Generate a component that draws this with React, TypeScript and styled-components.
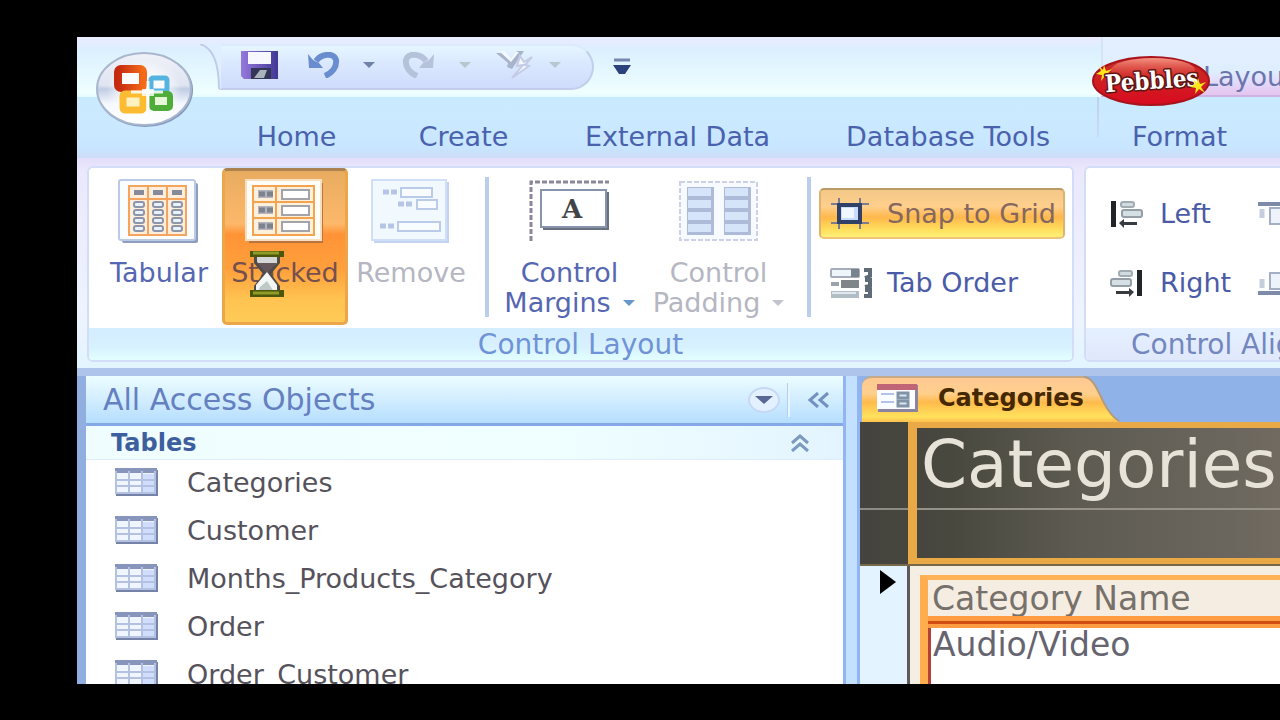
import React from "react";
import styled, { createGlobalStyle, css } from "styled-components";

const GlobalStyle = createGlobalStyle`
  *, *::before, *::after { box-sizing: border-box; }
  html, body { margin: 0; background: #000; }
  body { font-family: "DejaVu Sans", Verdana, sans-serif; font-size: 27px; overflow: hidden; }
  button, input { font: inherit; }
  h1, h2, ul { margin: 0; padding: 0; font-weight: normal; }
  svg { display: block; flex: none; }
`;

const Screen = styled.div`
  height: 100vh;
  padding: 37px 0 36px 77px;
`;

const Window = styled.div`
  position: relative;
  display: flex;
  flex-direction: column;
  height: 100%;
  overflow: hidden;
  background: #cbe9ff;
  white-space: nowrap;
`;

const PlainButton = styled.button`
  display: flex;
  align-items: center;
  flex: none;
  padding: 0;
  border: 0;
  background: none;
  color: #4a5ba8;
  line-height: 30px;
  white-space: nowrap;
`;

/* Title bar */

const TitleBar = styled.header`
  display: flex;
  flex: none;
  height: 60px;
  padding-left: 142px;
  background: linear-gradient(#ebebff 0, #dcefff 12px, #e0f4ff 24px, #f0ffff 56px, #e4faff);
`;

const QuickAccess = styled.div`
  position: relative;
  display: flex;
  align-items: flex-start;
  width: 375px;
  height: 46px;
  margin-top: 7px;
  padding: 4px 0 0 21px;
  border: 2px solid #c3cdec;
  border-left: 0;
  border-top-color: #dbeafc;
  border-radius: 0 24px 24px 0;
  background: linear-gradient(#e6f6ff 0, #dbe9ff 16px, #cfdcfb);
`;

const Swoosh = styled.svg`
  position: absolute;
  left: -20px;
  top: -2px;
`;

const QuickButton = styled(PlainButton)<{ $space?: number }>`
  margin-right: ${(p) => p.$space ?? 0}px;
  height: 30px;
`;

const CustomizeButton = styled(PlainButton)`
  align-self: flex-start;
  height: 30px;
  margin: 14px 0 0 19px;
`;

const ContextTitle = styled.div`
  display: flex;
  align-items: center;
  flex: none;
  width: 340px;
  margin-left: auto;
  margin-right: -161px;
  padding: 20px 0 0 100px;
  border-left: 2px solid #d4e2fa;
  border-bottom: 2px solid #cdb2e4;
  background: linear-gradient(#e4f0ff 0, #dfeeff 34px, #e3d6f8 48px, #e5c4ed);
  color: #6b75ac;
  font-size: 27px;
`;

const OfficeButton = styled.button`
  position: absolute;
  left: 18px;
  top: 14px;
  padding: 0;
  border: 0;
  background: none;
`;

const Logo = styled.svg`
  position: absolute;
  right: 69px;
  top: 18px;
`;

/* Ribbon */

const TabRow = styled.nav`
  display: flex;
  flex: none;
  height: 61px;
  padding-left: 136px;
  background: linear-gradient(#c8eaff, #cbe9ff 20px, #c8e6ff 50px, #cddcf8);
`;

const Tab = styled.button`
  flex: none;
  min-width: 167px;
  padding: 17px 38px 0;
  border: 0;
  background: none;
  color: #4a62ae;
`;

const ContextTab = styled(Tab)`
  margin-left: 9px;
  padding: 17px 36px 0 34px;
  background: linear-gradient(#c2cdef, #c6dcf8) 0 0 / 2px 40px no-repeat;
`;

const Ribbon = styled.section`
  display: flex;
  flex: none;
  gap: 10px;
  height: 210px;
  padding: 8px 0 6px 10px;
  background: linear-gradient(#e4defa 0, #ebe8fd 12px, #eef3ff 150px, #e2f5ff);
`;

const Group = styled.div<{ $open?: boolean }>`
  display: flex;
  flex-direction: column;
  flex: none;
  width: ${(p) => (p.$open ? "600px" : "auto")};
  border: 2px solid #d3ddf7;
  border-radius: 6px;
  background: #fff;
  overflow: hidden;
`;

const GroupBody = styled.div`
  display: flex;
  flex: 1;
  padding: 0 7px;
`;

const Caption = styled.h2<{ $soft?: boolean }>`
  flex: none;
  height: 32px;
  padding-left: ${(p) => (p.$soft ? "45px" : "0")};
  text-align: ${(p) => (p.$soft ? "left" : "center")};
  background: ${(p) => (p.$soft ? "linear-gradient(#e4f0ff, #e0e8fc)" : "linear-gradient(#d4edff, #d8f1ff 60%, #e2ffff)")};
  color: ${(p) => (p.$soft ? "#7287bd" : "#6f93d6")};
  font-size: 28px;
  line-height: 33px;
`;

const LargeButton = styled(PlainButton)<{ $wide?: boolean; $active?: boolean }>`
  position: relative;
  flex-direction: column;
  width: ${(p) => (p.$wide ? 149 : 126)}px;
  height: 157px;
  padding-top: 11px;
  gap: 13px;
  border-radius: 5px;
  color: #5567b2;
  &:disabled { color: #b4b6c2; }
  ${(p) =>
    p.$active &&
    css`
      padding-top: 8px;
      border: 3px solid #eda54a;
      border-top-color: #ab8350;
      color: #76504e;
      background: linear-gradient(#e8ac60 0, #fdb86a 35%, #ff9336 42%, #ffa03c 65%, #ffc350 85%, #ffcb58);
    `}
`;

const Label = styled.span`
  display: block;
  text-align: center;
`;

const ArrowLine = styled.span`
  display: flex;
  align-items: center;
  gap: 12px;
`;

const Hourglass = styled.svg`
  position: absolute;
  left: 24px;
  top: 79px;
`;

const Separator = styled.div<{ $first?: boolean }>`
  width: 4px;
  height: 140px;
  margin: ${(p) => (p.$first ? "9px 6px 0 11px" : "9px 8px 0 14px")};
  background: #b9cdec;
`;

const Column = styled.div`
  display: flex;
  flex-direction: column;
  gap: 18px;
  padding-top: 20px;
`;

const RowButton = styled(PlainButton)<{ $active?: boolean }>`
  gap: 14px;
  width: 246px;
  height: 51px;
  padding: 0 8px 0 9px;
  border: 2px solid transparent;
  border-radius: 5px;
  ${(p) =>
    p.$active &&
    css`
      color: #85675f;
      border-color: #bb9a68 #dfb36e #efc477;
      background: linear-gradient(#f3c888 0, #ffcf8c 35%, #ffb84c 58%, #ffe05e 85%, #fff078);
    `}
`;

const AlignButton = styled(PlainButton)`
  gap: 17px;
  width: 124px;
  height: 51px;
`;

const AlignColumn = styled(Column)`
  margin-left: 17px;
  & + & { margin-left: 24px; }
`;

/* Workspace */

const Workspace = styled.main`
  display: grid;
  grid-template-columns: minmax(0, 783fr) minmax(0, 420fr);
  flex: 1;
  min-height: 0;
  border-top: 8px solid #aec4ea;
`;

const NavPane = styled.aside`
  min-height: 0;
  overflow: hidden;
  border-left: 9px solid #90aee0;
  border-right: 3px solid #92b4f2;
  box-shadow: inset -11px 0 #c3e0ff, inset -14px 0 #92b4f2;
  padding-right: 14px;
`;

const NavHeader = styled.div`
  display: flex;
  align-items: center;
  height: 50px;
  padding: 0 13px 0 17px;
  border-bottom: 3px solid #85a9e8;
  background: linear-gradient(#ecfdff, #d2edff 50%, #b5deff);
  color: #6580c0;
`;

const NavTitle = styled.h2`
  flex: 1;
  font-size: 30px;
`;

const NavDivider = styled.div`
  width: 3px;
  height: 34px;
  margin: 0 18px 0 6px;
  background: #e7f5ff;
  border-left: 1px solid #b4cff4;
`;

const Section = styled.button`
  display: flex;
  align-items: center;
  justify-content: space-between;
  width: 100%;
  height: 34px;
  padding: 0 33px 0 25px;
  border: 0;
  border-bottom: 1px solid #dfebff;
  background: linear-gradient(90deg, #effdff, #f0ffff 60%, #e4f4ff);
  color: #3d5f9e;
  font-size: 24px;
  font-weight: bold;
`;

const ObjectList = styled.ul`
  height: 100%;
  list-style: none;
  background: #fff;
`;

const ObjectLink = styled.a`
  display: flex;
  align-items: center;
  gap: 29px;
  height: 48px;
  padding: 0 0 4px 29px;
  color: #56525c;
  text-decoration: none;
`;

const Document = styled.section`
  display: flex;
  flex-direction: column;
  min-width: 0;
  min-height: 0;
  overflow: hidden;
  background: #8fb3e8;
`;

const DocTabs = styled.div`
  flex: none;
  height: 46px;
  padding-left: 2px;
`;

const DocTab = styled.button`
  position: relative;
  display: flex;
  align-items: center;
  gap: 20px;
  height: 46px;
  width: 223px;
  padding: 0 0 4px 15px;
  border: 0;
  border-top: 2px solid #c8a985;
  border-radius: 10px 0 0 0;
  background: linear-gradient(#ffc993 0, #ffcf8d 35%, #ffbb4c 55%, #ffe15c 88%, #ffc04e);
  color: #452800;
  font-size: 24px;
  font-weight: bold;
`;

const TabSlope = styled.svg`
  position: absolute;
  left: 222px;
  top: -2px;
`;

const FormHeader = styled.div`
  display: flex;
  flex: none;
  height: 144px;
  background: linear-gradient(90deg, #44433d, #49483f 90px, #5d5b52 220px, #706a61);
  border-bottom: 2px solid #77684b;
`;

const Selector = styled.div`
  flex: none;
  width: 48px;
`;

const SelectorTop = styled.div`
  height: 88px;
  border-bottom: 2px solid #8d8b86;
`;

const HeaderFrame = styled.div`
  flex: 1;
  min-width: 0;
  border: 6px solid #e9a946;
  border-left-width: 9px;
  border-right: 0;
`;

const FormTitle = styled.h1`
  height: 82px;
  padding-left: 4px;
  border-bottom: 2px solid #969189;
  color: #e7e3d9;
  font-size: 66px;
  line-height: 74px;
  overflow: hidden;
`;

const FormBody = styled.div`
  display: flex;
  flex: 1;
  min-height: 0;
`;

const RecordSelector = styled.button`
  flex: none;
  display: flex;
  align-items: flex-start;
  width: 50px;
  padding: 4px 0 0 20px;
  border: 0;
  border-right: 3px solid #5c5b59;
  background: #e3f3ff;
`;

const Detail = styled.div`
  flex: 1;
  min-width: 0;
  padding: 9px 0 0 10px;
  background: #f4eee3;
`;

const FieldFrame = styled.div`
  display: flex;
  flex-direction: column;
  height: 100%;
  border-left: 8px solid #ffad4e;
  border-top: 5px solid #ffb356;
  font-size: 33px;
`;

const FieldLabel = styled.label`
  flex: none;
  height: 36px;
  padding-left: 4px;
  background: #f5ede1;
  color: #77716c;
  line-height: 38px;
`;

const FieldRule = styled.div`
  flex: none;
  height: 12px;
  border: solid #ff9c41;
  border-width: 5px 0 4px;
  background: #d24c12;
`;

const FieldCell = styled.div`
  flex: 1;
  border-left: 3px solid #b64233;
  background: #fff;
`;

const FieldInput = styled.input`
  display: block;
  width: 100%;
  height: 32px;
  padding: 0 0 0 2px;
  border: 0;
  outline: 0;
  background: transparent;
  color: #66646f;
  line-height: 32px;
`;

/* Drawings */

const Arrow = ({ color = "#6f83a9", w = 12 }: { color?: string; w?: number }) => (
  <svg width={w} height="6" viewBox="0 0 12 6" preserveAspectRatio="none">
    <path d="M0 0H12L6 6Z" fill={color} />
  </svg>
);

const OfficeIcon = () => (
  <svg width="100" height="78" viewBox="0 0 100 78">
    <defs>
      <linearGradient id="orb" x1="0" y1="0" x2="0" y2="1">
        <stop offset="0" stopColor="#f0f2f8" />
        <stop offset=".45" stopColor="#dfe4f1" />
        <stop offset=".5" stopColor="#bfcce4" />
        <stop offset=".7" stopColor="#f4f8fd" />
        <stop offset="1" stopColor="#fff" />
      </linearGradient>
      <linearGradient id="red"><stop offset="0" stopColor="#c42a10" /><stop offset="1" stopColor="#f46a18" /></linearGradient>
      <radialGradient id="glow"><stop offset="0" stopColor="#fff" /><stop offset=".6" stopColor="#fff" stopOpacity=".7" /><stop offset="1" stopColor="#fff" stopOpacity="0" /></radialGradient>
    </defs>
    <ellipse cx="50" cy="39" rx="48" ry="37" fill="#8299bd" />
    <ellipse cx="49" cy="38" rx="47" ry="36" fill="url(#orb)" stroke="#a9b6ce" strokeWidth="2" />
    <ellipse cx="49" cy="40" rx="38" ry="31" fill="url(#glow)" />
    <rect x="23" y="18" width="25" height="19" rx="3" fill="#fff" fillOpacity=".6" stroke="url(#red)" strokeWidth="8" />
    <rect x="56" y="27" width="16" height="13" rx="2" fill="#fff" fillOpacity=".4" stroke="#55b4df" strokeWidth="5" />
    <rect x="28" y="43" width="20" height="16" rx="2" fill="#fff2c0" stroke="#fcbb31" strokeWidth="7" />
    <rect x="57" y="43" width="18" height="14" rx="2" fill="#e6f8d8" stroke="#4dad38" strokeWidth="6" />
    <path d="M36 41H68M53 30V58" stroke="#fff" strokeWidth="3" opacity=".85" />
    <path d="M47 38H59V45H47Z" fill="#fff" opacity=".8" />
  </svg>
);

const SaveIcon = () => (
  <svg width="39" height="30" viewBox="0 0 39 30">
    <defs><linearGradient id="disk"><stop offset="0" stopColor="#9679dc" /><stop offset="1" stopColor="#413894" /></linearGradient></defs>
    <path d="M1 1H38V29H4L1 26Z" fill="url(#disk)" />
    <path d="M8 2H31V14H8Z" fill="#f7f8ff" />
    <path d="M11 18H31V29H11Z" fill="#343557" />
    <path d="M14 28L20 20H27L24 28Z" fill="#a9b3bc" />
  </svg>
);

const UndoIcon = ({ color, redo }: { color: string; redo?: boolean }) => (
  <svg width="34" height="26" viewBox="0 0 34 26">
    <g transform={redo ? "translate(34 0) scale(-1 1)" : undefined}>
      <path d="M9 9C14 2 27 0 29 8C30 15 25 21 18 24" fill="none" stroke={color} strokeWidth="6" />
      <path d="M1 2L2 16H16L12 11L6 8Z" fill={color} />
    </g>
  </svg>
);

const BoltIcon = () => (
  <svg width="40" height="32" viewBox="0 0 40 32">
    <path d="M1 4L7 4L16 12L22 2H29L17 20L12 18L13 14Z" fill="#a9b4ca" />
    <path d="M4 2L10 2L16 10L21 3H24L16 13Z" fill="#f3f8ff" />
    <path d="M25 7L22 17L28 16L17 29L34 17L30 16L37 8L29 13Z" fill="#f3f7ff" stroke="#c3cce4" strokeWidth="2" />
  </svg>
);

const TabularIcon = () => (
  <svg width="82" height="66" viewBox="0 0 82 66">
    <rect x="4" y="4" width="76" height="60" rx="2" fill="#8e9dbb" />
    <rect x="1" y="1" width="76" height="60" rx="2" fill="#fbfcff" stroke="#bac9e5" strokeWidth="2" />
    <rect x="11" y="7" width="57" height="49" fill="#ffeedb" stroke="#f4a45c" strokeWidth="2" />
    <path d="M30 7V56M49 7V56M11 20H68" stroke="#f4a45c" strokeWidth="2" />
    {[16, 35, 54].map((x) => (
      <g key={x}>
        <rect x={x} y="11" width="10" height="5" fill="#858b99" />
        {[23, 31, 39, 47].map((y) => (
          <rect key={y} x={x} y={y} width="10" height="5" rx="2" fill="#eaf2ff" stroke="#8c96aa" strokeWidth="2" />
        ))}
      </g>
    ))}
  </svg>
);

const StackedIcon = () => (
  <svg width="80" height="66" viewBox="0 0 80 66">
    <path d="M4 4H78V64H4Z" fill="#bb7440" />
    <rect x="1" y="1" width="75" height="60" fill="#fffdf7" stroke="#f7dfc2" strokeWidth="2" />
    <rect x="8" y="7" width="61" height="49" fill="#fff0dc" stroke="#f4a350" strokeWidth="2" />
    <path d="M31 7V56M8 23H69M8 39H69" stroke="#f4a350" strokeWidth="2" />
    {[11, 27, 43].map((y) => (
      <g key={y}>
        <rect x="13" y={y} width="15" height="8" fill="#b2b4bd" />
        <path d={`M14 ${y + 4}H20M22 ${y + 4}H28`} stroke="#7d828f" strokeWidth="5" />
        <rect x="37" y={y} width="27" height="9" fill="#fff" stroke="#a3a4a9" strokeWidth="2" />
      </g>
    ))}
  </svg>
);

const RemoveIcon = () => (
  <svg width="80" height="66" viewBox="0 0 80 66">
    <rect x="3" y="3" width="75" height="61" fill="#c2d4f2" />
    <rect x="1" y="1" width="74" height="60" fill="#f1f9ff" stroke="#cfdff8" strokeWidth="2" />
    <g stroke="#b6c5e5" strokeWidth="5" strokeDasharray="6 2"><path d="M12 13H27M27 25H42M9 47H24" /></g>
    <g fill="#f8fcff" stroke="#bacbea" strokeWidth="2">
      <rect x="30" y="9" width="31" height="9" /><rect x="46" y="21" width="20" height="9" /><rect x="27" y="43" width="42" height="9" />
    </g>
  </svg>
);

const MarginsIcon = () => (
  <svg width="82" height="66" viewBox="0 0 82 66">
    <path d="M2 62V3H80" fill="none" stroke="#8b8798" strokeWidth="3" strokeDasharray="5 2" />
    <path d="M14 13H80V51H14Z" fill="#68717c" />
    <rect x="12" y="11" width="65" height="37" fill="#fff" stroke="#8893ad" strokeWidth="2" />
    <text x="43" y="39" textAnchor="middle" fontFamily="DejaVu Serif, serif" fontWeight="bold" fontSize="26" fill="#414446">A</text>
  </svg>
);

const PaddingIcon = () => (
  <svg width="82" height="66" viewBox="0 0 82 66">
    <rect x="2" y="3" width="77" height="58" fill="#f7faff" stroke="#ccd1e6" strokeWidth="2" strokeDasharray="5 2" />
    {[9, 46].map((x) => [8, 20, 32, 44].map((y) => (
      <g key={`${x}-${y}`}>
        <rect x={x} y={y} width="27" height="12" fill="#adbbd8" />
        <rect x={x + 1} y={y + 1} width="23" height="8" fill="#d6e4f9" />
      </g>
    )))}
  </svg>
);

const HourglassIcon = () => (
  <Hourglass width="36" height="48" viewBox="0 0 36 48">
    <path d="M5 6H31V13L22 24L31 36V43H5V36L14 24L5 13Z" fill="#504a4b" />
    <path d="M8 6H28V13L18 20L8 12Z" fill="#d5d6d6" />
    <path d="M8 13H28L18 23Z" fill="#65565c" />
    <path d="M18 22L28 35V42H7V35Z" fill="#f2f6f4" />
    <path d="M11 37L18 31L25 42H9Z" fill="#bec9c7" />
    <path d="M1 1H35V7H1ZM1 40H35V47H1Z" fill="#4d570b" />
    <path d="M4 3H30M4 43H30" stroke="#8f9d28" strokeWidth="3" />
  </Hourglass>
);

const GridIcon = () => (
  <svg width="43" height="32" viewBox="-1 0 43 32">
    <path d="M8 0V31M29 0V31M0 6H38M0 25H38" stroke="#7b7d92" strokeWidth="2" />
    <rect x="8" y="7" width="21" height="17" fill="#c9dcff" stroke="#314067" strokeWidth="4" />
    <path d="M11 10H23V20H11Z" fill="#f0f7ff" />
  </svg>
);

const TabOrderIcon = () => (
  <svg width="43" height="32" viewBox="0 0 43 32">
    <rect x="1" y="2" width="28" height="8" rx="1" fill="#eff6fb" stroke="#a4adb8" strokeWidth="2" />
    <path d="M21 2H29V10H21Z" fill="#78838d" />
    <path d="M1 17H9" stroke="#9ba4ac" strokeWidth="4" />
    <rect x="11" y="13" width="18" height="8" fill="#7f8588" />
    <path d="M1 24H29V31H1Z" fill="#b1bdc5" />
    <path d="M2 26H26" stroke="#e2e9ee" strokeWidth="2" />
    <path d="M34 3H40V9L35 11M35 13H40V19L35 20M35 23H40V29H34" fill="none" stroke="#5f6b77" strokeWidth="4" />
  </svg>
);

const AlignIcon = ({ right }: { right?: boolean }) => (
  <svg width="33" height="28" viewBox="0 0 33 28">
    <g transform={right ? "translate(33 0) scale(-1 1)" : undefined}>
      <path d="M1 1H6V27H1Z" fill="#222528" />
      <rect x="11" y="2" width="13" height="5" rx="2" fill="#d2dbe0" stroke="#a0abb2" strokeWidth="2" />
      <rect x="12" y="10" width="20" height="7" rx="2" fill="#d4e0e4" stroke="#949ea6" strokeWidth="2" />
      <path d="M9 23L14 19V22H27V25H14V28Z" fill="#383c40" />
    </g>
  </svg>
);

const EdgeIcon = ({ bottom }: { bottom?: boolean }) => (
  <svg width="33" height="26" viewBox="0 0 33 26">
    <g transform={bottom ? "translate(0 26) scale(1 -1)" : undefined}>
      <path d="M0 3H33" stroke="#7e8ba8" strokeWidth="4" />
      <path d="M4 8V17" stroke="#c4cedc" strokeWidth="5" />
      <rect x="12" y="7" width="11" height="16" fill="#eef3fb" stroke="#a3afc4" strokeWidth="2" />
    </g>
  </svg>
);

const TableIcon = () => (
  <svg width="43" height="28" viewBox="0 0 43 28">
    <path d="M1 2H43V28H1Z" fill="#7583a9" />
    <path d="M1 1H40V25H1Z" fill="#f0f6ff" />
    <path d="M27 6H40V25H27Z" fill="#cfdeff" />
    <path d="M0 0H42V5H0Z" fill="#8794bc" />
    <path d="M1 12H40M1 18H40M1 25H40M1 3V26M14 3V26M27 3V26M40 3V26" stroke="#b4c1e0" strokeWidth="2" />
  </svg>
);

const FormIcon = () => (
  <svg width="41" height="28" viewBox="0 0 41 28">
    <path d="M1 1H41V28H1Z" fill="#8a849e" />
    <path d="M0 0H38V25H0Z" fill="#fbfcff" />
    <path d="M0 0H40V6H0Z" fill="#bf6576" />
    <path d="M4 10H17M4 18H17" stroke="#b6c3e8" strokeWidth="2" />
    <rect x="21" y="9" width="10" height="5" fill="#d9e6ef" stroke="#8293a7" strokeWidth="3" />
    <rect x="21" y="17" width="10" height="5" fill="#d9e6ef" stroke="#8293a7" strokeWidth="3" />
  </svg>
);

const Sparkle = ({ x, y }: { x: number; y: number }) => (
  <path transform={`translate(${x} ${y})`} d="M0 -8L2 -2L8 -4L3 1L7 7L1 3L-3 8L-2 2L-8 1L-3 -2L-5 -7L-1 -3Z" fill="#ffe51c" />
);

const PebblesLogo = () => (
  <Logo width="120" height="52" viewBox="0 0 120 52" role="img" aria-label="Pebbles">
    <defs>
      <linearGradient id="pebble" x1="0" y1="0" x2="0" y2="1">
        <stop offset="0" stopColor="#c82b26" /><stop offset=".5" stopColor="#cf1f22" /><stop offset="1" stopColor="#d90a20" />
      </linearGradient>
      <linearGradient id="shine" x1="0" y1="0" x2="0" y2="1">
        <stop offset="0" stopColor="#f59484" /><stop offset="1" stopColor="#d93d33" stopOpacity="0" />
      </linearGradient>
    </defs>
    <ellipse cx="60" cy="26" rx="58" ry="24" fill="url(#pebble)" stroke="#a9141b" strokeWidth="2" />
    <ellipse cx="62" cy="15" rx="42" ry="12" fill="url(#shine)" />
    <Sparkle x={13} y={18} />
    <text x="61" y="34" transform="rotate(-4 60 30)" textAnchor="middle" fontFamily="'DejaVu Serif Condensed', 'DejaVu Serif', serif" fontWeight="bold" fontSize="24" fill="#fff" stroke="#5d1512" strokeWidth="3" paintOrder="stroke" strokeLinejoin="round">Pebbles</text>
    <Sparkle x={107} y={31} />
  </Logo>
);

const tables = ["Categories", "Customer", "Months_Products_Category", "Order", "Order_Customer"];

export default function App() {
  return (
    <Screen>
      <GlobalStyle />
      <Window>
        <TitleBar>
          <QuickAccess>
            <Swoosh width="22" height="46" viewBox="0 0 22 46">
              <path d="M1 0C15 4 20 20 20 45H22V0Z" fill="#e0efff" />
              <path d="M1 0C15 4 20 20 20 45" fill="none" stroke="#c0cceb" strokeWidth="2" />
            </Swoosh>
            <QuickButton $space={28} aria-label="Save"><SaveIcon /></QuickButton>
            <QuickButton $space={22} aria-label="Undo"><UndoIcon color="#6a8dd0" /></QuickButton>
            <QuickButton $space={26} aria-label="Undo list"><Arrow /></QuickButton>
            <QuickButton $space={24} aria-label="Redo"><UndoIcon color="#b6c2da" redo /></QuickButton>
            <QuickButton $space={24} aria-label="Redo list"><Arrow color="#b8c7cd" /></QuickButton>
            <QuickButton $space={14} aria-label="Format"><BoltIcon /></QuickButton>
            <QuickButton aria-label="Format list"><Arrow color="#b8c7cd" /></QuickButton>
          </QuickAccess>
          <CustomizeButton aria-label="Customize toolbar">
            <svg width="18" height="17" viewBox="0 0 18 17">
              <path d="M1 2H17" stroke="#7487b1" strokeWidth="3" />
              <path d="M0 7H18L12 16H6Z" fill="#2b427c" />
            </svg>
          </CustomizeButton>
          <ContextTitle>Layout Tools</ContextTitle>
        </TitleBar>

        <TabRow>
          <Tab>Home</Tab>
          <Tab>Create</Tab>
          <Tab>External Data</Tab>
          <Tab>Database Tools</Tab>
          <ContextTab>Format</ContextTab>
        </TabRow>

        <Ribbon>
          <Group>
            <GroupBody>
              <LargeButton><TabularIcon /><Label>Tabular</Label></LargeButton>
              <LargeButton $active><StackedIcon /><Label>Stacked</Label><HourglassIcon /></LargeButton>
              <LargeButton disabled><RemoveIcon /><Label>Remove</Label></LargeButton>
              <Separator $first />
              <LargeButton $wide>
                <MarginsIcon />
                <Label>Control<ArrowLine>Margins <Arrow color="#6798cc" /></ArrowLine></Label>
              </LargeButton>
              <LargeButton $wide disabled>
                <PaddingIcon />
                <Label>Control<ArrowLine>Padding <Arrow color="#c0c4cc" /></ArrowLine></Label>
              </LargeButton>
              <Separator />
              <Column>
                <RowButton $active><GridIcon />Snap to Grid</RowButton>
                <RowButton><TabOrderIcon />Tab Order</RowButton>
              </Column>
            </GroupBody>
            <Caption>Control Layout</Caption>
          </Group>
          <Group $open>
            <GroupBody>
              <AlignColumn>
                <AlignButton><AlignIcon />Left</AlignButton>
                <AlignButton><AlignIcon right />Right</AlignButton>
              </AlignColumn>
              <AlignColumn>
                <AlignButton aria-label="Top"><EdgeIcon /></AlignButton>
                <AlignButton aria-label="Bottom"><EdgeIcon bottom /></AlignButton>
              </AlignColumn>
            </GroupBody>
            <Caption $soft>Control Alignment</Caption>
          </Group>
        </Ribbon>

        <Workspace>
          <NavPane>
            <NavHeader>
              <NavTitle>All Access Objects</NavTitle>
              <PlainButton aria-label="Filter objects">
                <svg width="34" height="28" viewBox="0 0 34 28">
                  <ellipse cx="17" cy="14" rx="15" ry="12" fill="#e2f0ff" stroke="#c6d8f5" strokeWidth="2" />
                  <path d="M8 10H26L17 18Z" fill="#5a6796" />
                </svg>
              </PlainButton>
              <NavDivider />
              <PlainButton aria-label="Collapse pane">
                <svg width="22" height="16" viewBox="0 0 22 16">
                  <path d="M10 1L2 8L10 15M20 1L12 8L20 15" fill="none" stroke="#7391c0" strokeWidth="3" />
                </svg>
              </PlainButton>
            </NavHeader>
            <Section>
              Tables
              <svg width="20" height="18" viewBox="0 0 20 18">
                <path d="M2 9L10 2L18 9M2 17L10 10L18 17" fill="none" stroke="#7b9abf" strokeWidth="3" />
              </svg>
            </Section>
            <ObjectList>
              {tables.map((name) => (
                <li key={name}><ObjectLink href="#"><TableIcon />{name}</ObjectLink></li>
              ))}
            </ObjectList>
          </NavPane>

          <Document>
            <DocTabs>
              <DocTab>
                <FormIcon />Categories
                <TabSlope width="36" height="46" viewBox="0 0 36 46">
                  <defs>
                    <linearGradient id="slope" x1="0" y1="0" x2="0" y2="1">
                      <stop offset="0" stopColor="#ffc993" /><stop offset=".38" stopColor="#ffcf8d" /><stop offset=".57" stopColor="#ffbb4c" /><stop offset=".88" stopColor="#ffe15c" /><stop offset="1" stopColor="#ffc04e" />
                    </linearGradient>
                  </defs>
                  <path d="M0 1C15 2 16 33 35 46H0Z" fill="url(#slope)" />
                  <path d="M0 1C15 2 16 33 35 45" fill="none" stroke="#b69a7c" strokeWidth="2" />
                </TabSlope>
              </DocTab>
            </DocTabs>
            <FormHeader>
              <Selector><SelectorTop /></Selector>
              <HeaderFrame><FormTitle>Categories</FormTitle></HeaderFrame>
            </FormHeader>
            <FormBody>
              <RecordSelector aria-label="Select record">
                <svg width="16" height="24" viewBox="0 0 16 24"><path d="M0 0L16 12L0 24Z" fill="#000" /></svg>
              </RecordSelector>
              <Detail>
                <FieldFrame>
                  <FieldLabel htmlFor="category-name">Category Name</FieldLabel>
                  <FieldRule />
                  <FieldCell><FieldInput id="category-name" defaultValue="Audio/Video" /></FieldCell>
                </FieldFrame>
              </Detail>
            </FormBody>
          </Document>
        </Workspace>

        <OfficeButton aria-label="Office menu"><OfficeIcon /></OfficeButton>
        <PebblesLogo />
      </Window>
    </Screen>
  );
}
